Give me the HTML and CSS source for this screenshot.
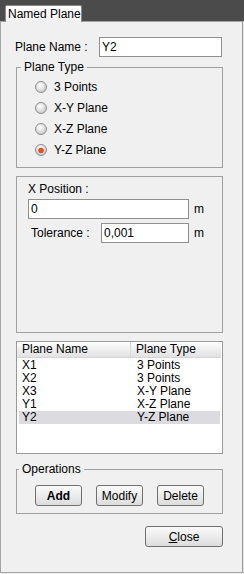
FILE: index.html
```html
<!DOCTYPE html>
<html lang="en">
<head>
  <meta charset="utf-8">
  <title>Named Plane</title>
  <link rel="stylesheet" href="styles.css">
</head>
<body>

  <div class="tabbar">
    <div class="tab">Named Plane</div>
  </div>

  <div class="panel">

    <div class="name-row">
      <label class="name-label">Plane Name :</label>
      <input type="text" class="box name-input" value="Y2">
    </div>

    <fieldset class="group type-group">
      <legend>Plane Type</legend>
      <div class="radio"><span class="dot"></span>3 Points</div>
      <div class="radio"><span class="dot"></span>X-Y Plane</div>
      <div class="radio"><span class="dot"></span>X-Z Plane</div>
      <div class="radio"><span class="dot checked"></span>Y-Z Plane</div>
    </fieldset>

    <fieldset class="group pos-group">
      <div class="pos-label">X Position :</div>
      <div class="pos-row">
        <input type="text" class="box wide" value="0">
        <span class="unit">m</span>
      </div>
      <div class="pos-row tol-row">
        <label class="tol-label">Tolerance :</label>
        <input type="text" class="box narrow" value="0,001">
        <span class="unit">m</span>
      </div>
    </fieldset>

    <div class="list">
      <div class="list-head">
        <div class="col-name">Plane Name</div>
        <div class="col-type">Plane Type</div>
      </div>
      <div class="list-body">
        <div class="list-row"><span class="col-name">X1</span><span class="col-type">3 Points</span></div>
        <div class="list-row"><span class="col-name">X2</span><span class="col-type">3 Points</span></div>
        <div class="list-row"><span class="col-name">X3</span><span class="col-type">X-Y Plane</span></div>
        <div class="list-row"><span class="col-name">Y1</span><span class="col-type">X-Z Plane</span></div>
        <div class="list-row selected"><span class="col-name">Y2</span><span class="col-type">Y-Z Plane</span></div>
      </div>
    </div>

    <fieldset class="group ops-group">
      <legend>Operations</legend>
      <div class="ops">
        <button class="btn add">Add</button>
        <button class="btn">Modify</button>
        <button class="btn">Delete</button>
      </div>
    </fieldset>

    <div class="footer">
      <button class="btn close"><u>C</u>lose</button>
    </div>

  </div>

</body>
</html>
```

FILE: styles.css
```css
html, body {
  margin: 0;
  padding: 0;
}

body {
  width: 244px;
  height: 574px;
  background-color: #ececec;
  font-family: "Liberation Sans", Arial, sans-serif;
  font-size: 12px;
  color: #000;
  overflow: hidden;
}

.tabbar {
  height: 21px;
  background-color: #4b4b4b;
  display: flex;
  align-items: flex-end;
  padding-left: 5px;
}

.tab {
  position: relative;
  z-index: 1;
  margin-bottom: -1px;
  width: 77px;
  height: 17px;
  box-sizing: border-box;
  border: 1px solid #8a8a8a;
  border-bottom: none;
  border-radius: 2px 2px 0 0;
  background: linear-gradient(#ffffff, #f0f0f0);
  padding-left: 2px;
  line-height: 16px;
  white-space: nowrap;
}

.panel {
  width: 244px;
  height: 552px;
  box-sizing: border-box;
  border: 1px solid #a4a4a4;
  border-right: 1px solid #e2e2e2;
  box-shadow: inset -1px 0 0 #9c9c9c;
  background-color: #f0f0f0;
  padding-top: 15px;
}

.box {
  box-sizing: border-box;
  height: 20px;
  border: 1px solid #8f8f8f;
  background-color: #fff;
  font-family: inherit;
  font-size: 12px;
  padding: 0 2px;
  margin: 0;
  outline: none;
}

.name-row {
  display: flex;
  align-items: center;
  margin-left: 14px;
}

.name-label {
  width: 84px;
}

.name-input {
  width: 123px;
}

.group {
  box-sizing: border-box;
  width: 207px;
  margin: 0 0 0 15px;
  border: 1px solid #a0a0a0;
  padding: 0;
  min-width: 0;
}

.group legend {
  padding: 0 3px;
  line-height: 14px;
}

.type-group {
  margin-top: 3px;
  padding: 2px 0 7px 0;
}

.type-group legend {
  margin-left: 4px;
}

.radio {
  height: 21px;
  display: flex;
  align-items: center;
  padding-left: 18px;
}

.dot {
  width: 12px;
  height: 12px;
  box-sizing: border-box;
  border-radius: 50%;
  border: 1px solid #8c8c8c;
  background: radial-gradient(circle at 40% 35%, #ffffff 0%, #e2e2e2 45%, #b8b8b8 100%);
  margin-right: 7px;
}

.dot.checked {
  background:
    radial-gradient(circle at 50% 55%, #f4561c 0%, #e8481a 32%, rgba(255,255,255,0) 42%),
    radial-gradient(circle at 40% 35%, #ffffff 0%, #e2e2e2 45%, #b8b8b8 100%);
}

.pos-group {
  margin-top: 8px;
  height: 157px;
  padding: 5px 0 0 11px;
}

.pos-label {
  line-height: 14px;
}

.pos-row {
  display: flex;
  align-items: center;
  margin-top: 3px;
}

.tol-row {
  margin-top: 4px;
}

.tol-label {
  width: 70px;
  margin-left: 3px;
}

.wide {
  width: 161px;
}

.narrow {
  width: 88px;
}

.unit {
  margin-left: 5px;
}

.list {
  box-sizing: border-box;
  width: 207px;
  height: 113px;
  margin: 8px 0 0 15px;
  border: 1px solid #9a9a9a;
  background-color: #fff;
  padding-right: 1px;
}

.list-head {
  display: flex;
  height: 16px;
  line-height: 15px;
  box-sizing: border-box;
  background: linear-gradient(#ffffff, #ececec 60%, #e2e2e2);
  border-bottom: 1px solid #d6d6d6;
}

.list-head .col-name {
  width: 114px;
  padding-left: 5px;
  box-sizing: border-box;
  border-right: 1px solid #d8d8d8;
}

.list-head .col-type {
  padding-left: 5px;
}

.list-body {
  padding: 1px 1px 0 2px;
}

.list-row {
  display: flex;
  height: 13px;
  line-height: 13px;
}

.list-row .col-name {
  width: 113px;
  padding-left: 3px;
  box-sizing: border-box;
}

.list-row .col-type {
  padding-left: 5px;
}

.list-row.selected {
  background-color: #dcdce0;
}

.ops-group {
  margin-top: 8px;
  padding: 9px 0 7px 0;
}

.ops-group legend {
  margin-left: 2px;
}

.ops {
  display: flex;
  gap: 14px;
  padding-left: 18px;
}

.btn {
  box-sizing: border-box;
  width: 47px;
  height: 21px;
  margin: 0;
  padding: 0;
  border: 1px solid #707070;
  border-radius: 3px;
  background: linear-gradient(#fafafa, #ececec 50%, #dcdcdc);
  font-family: inherit;
  font-size: 12px;
  color: #000;
}

.btn.add {
  font-weight: bold;
}

.footer {
  margin: 12px 0 0 144px;
}

.btn.close {
  width: 78px;
}
```
